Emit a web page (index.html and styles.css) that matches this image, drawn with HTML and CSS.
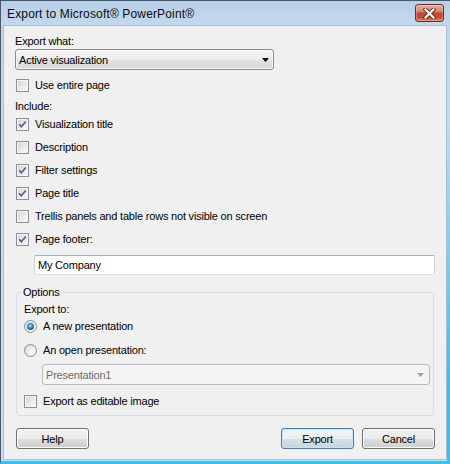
FILE: index.html
```html
<!DOCTYPE html>
<html>
<head>
<meta charset="utf-8">
<link rel="stylesheet" href="styles.css">
</head>
<body>
<div class="window">
  <div class="titlebar">
    <span class="title">Export to Microsoft® PowerPoint®</span>
    <span class="close">
      <svg width="13" height="11" viewBox="0 0 13 11">
        <path d="M2.5 1.5 L10.5 9.5 M10.5 1.5 L2.5 9.5" stroke="#5b2b25" stroke-width="4" stroke-linecap="square"/>
        <path d="M2.5 1.5 L10.5 9.5 M10.5 1.5 L2.5 9.5" stroke="#ffffff" stroke-width="2.2" stroke-linecap="square"/>
      </svg>
    </span>
  </div>
  <div class="client">
    <div class="label l-what">Export what:</div>
    <div class="combo">
      <span>Active visualization</span>
      <svg class="arrow" width="7" height="4" viewBox="0 0 7 4"><path d="M0 0 H7 L3.5 4 Z" fill="#000"/></svg>
    </div>
    <div class="row r-entire"><span class="cb"></span>Use entire page</div>
    <div class="label l-include">Include:</div>
    <div class="checks">
      <div class="row"><span class="cb"><svg width="11" height="11" viewBox="0 0 11 11"><path d="M2.2 5.3 L4.3 7.8 L8.8 2.6" fill="none" stroke="#4a5c94" stroke-width="1.6"/></svg></span>Visualization title</div>
      <div class="row"><span class="cb"></span>Description</div>
      <div class="row"><span class="cb"><svg width="11" height="11" viewBox="0 0 11 11"><path d="M2.2 5.3 L4.3 7.8 L8.8 2.6" fill="none" stroke="#4a5c94" stroke-width="1.6"/></svg></span>Filter settings</div>
      <div class="row"><span class="cb"><svg width="11" height="11" viewBox="0 0 11 11"><path d="M2.2 5.3 L4.3 7.8 L8.8 2.6" fill="none" stroke="#4a5c94" stroke-width="1.6"/></svg></span>Page title</div>
      <div class="row"><span class="cb"></span>Trellis panels and table rows not visible on screen</div>
      <div class="row"><span class="cb"><svg width="11" height="11" viewBox="0 0 11 11"><path d="M2.2 5.3 L4.3 7.8 L8.8 2.6" fill="none" stroke="#4a5c94" stroke-width="1.6"/></svg></span>Page footer:</div>
    </div>
    <div class="textbox">My Company</div>
    <fieldset class="group">
      <legend>Options</legend>
      <div class="label">Export to:</div>
      <div class="row r-radio1"><span class="radio on"><span class="dot"></span></span>A new presentation</div>
      <div class="row r-radio2"><span class="radio"></span>An open presentation:</div>
      <div class="combo disabled">
        <span>Presentation1</span>
        <svg class="arrow" width="7" height="4" viewBox="0 0 7 4"><path d="M0 0 H7 L3.5 4 Z" fill="#a3a3a3"/></svg>
      </div>
      <div class="row r-editable"><span class="cb"></span>Export as editable image</div>
    </fieldset>
    <div class="buttons">
      <span class="btn">Help</span>
      <span class="spacer"></span>
      <span class="btn default">Export</span>
      <span class="btn">Cancel</span>
    </div>
  </div>
</div>
</body>
</html>
```

FILE: styles.css
```css
html, body {
  margin: 0;
  padding: 0;
}
body {
  font-family: "Liberation Sans", Arial, sans-serif;
  font-size: 11px;
  letter-spacing: -0.2px;
  color: #000;
  background: #c6daef;
}
.window {
  width: 450px;
  height: 464px;
  box-sizing: border-box;
  display: flex;
  flex-direction: column;
  border-top: 1px solid #4a5866;
  border-left: 1px solid #4a5866;
  border-bottom: 3px solid #3cc0e8;
  background:
    linear-gradient(to bottom, rgba(60,192,232,0) 120px, #3cc0e8 380px) right top / 3px 100% no-repeat,
    linear-gradient(to bottom, #b7cfe9 0, #c3d8ee 24px, #cbdef1 100%);
}
.titlebar {
  height: 24px;
  display: flex;
  align-items: flex-start;
  padding-left: 6px;
}
.title {
  font-size: 12px;
  letter-spacing: 0.15px;
  line-height: 15px;
  margin-top: 6px;
  color: #0c0c0c;
}
.close {
  margin-left: auto;
  margin-right: 6px;
  margin-top: 3px;
  width: 29px;
  height: 18px;
  box-sizing: border-box;
  border: 1px solid #6a2e26;
  border-radius: 3px;
  display: flex;
  align-items: center;
  justify-content: center;
  background: linear-gradient(to bottom, #eab0a2 0%, #d98470 40%, #c2462e 50%, #c24a30 75%, #d8835f 100%);
  box-shadow: inset 0 0 0 1px rgba(255,255,255,0.25);
}
.client {
  flex: 1;
  margin: 0 3px 1px 2px;
  background: #f0f0f0;
  border: 1px solid #aabdd2;
  padding: 8px 11px 0 11px;
  display: flex;
  flex-direction: column;
}
.label {
  line-height: 14px;
  height: 14px;
}
.combo {
  margin-top: 1px;
  width: 259px;
  height: 21px;
  box-sizing: border-box;
  border: 1px solid #8a8a8a;
  border-radius: 3px;
  background: linear-gradient(to bottom, #f4f4f4 0%, #ececec 50%, #e1e1e1 51%, #d9d9d9 100%);
  box-shadow: inset 0 0 0 1px #fbfbfb;
  display: flex;
  align-items: center;
  padding-left: 3px;
  padding-right: 4px;
}
.combo .arrow {
  margin-left: auto;
}
.combo.disabled {
  width: auto;
  margin: 5px 0 0 18px;
  border-color: #b6babd;
  background: #f4f4f4;
  box-shadow: none;
  color: #6d6d6d;
  padding-right: 5px;
}
.row {
  height: 18px;
  display: flex;
  align-items: center;
}
.r-entire { margin-top: 6px; }
.l-include { margin-top: 5px; }
.checks {
  margin-top: 2px;
  display: flex;
  flex-direction: column;
  gap: 5px;
}
.cb {
  width: 13px;
  height: 13px;
  box-sizing: border-box;
  border: 1px solid #8e8f8f;
  background: linear-gradient(135deg, #cdd0d5 0%, #e6e8eb 50%, #fafafa 100%);
  box-shadow: inset 0 0 0 1px #f6f6f6;
  margin-left: 1px;
  margin-right: 6px;
  flex: none;
  display: flex;
  align-items: center;
  justify-content: center;
}
.cb svg { display: block; }
.textbox {
  margin: 7px 0 0 19px;
  height: 20px;
  box-sizing: border-box;
  background: #fff;
  border: 1px solid;
  border-color: #a6b0c0 #c8d3e2 #d6dee9 #c8d3e2;
  border-radius: 2px;
  padding-left: 3px;
  line-height: 18px;
}
.group {
  margin: 10px 1px 0 1px;
  padding: 3px 3px 5px 7px;
  border: 1px solid #d5dfe5;
  border-radius: 3px;
  min-width: 0;
  display: flex;
  flex-direction: column;
}
.group legend {
  padding: 0 1px;
  margin-left: -2px;
  line-height: 14px;
}
.group .row .cb { margin-left: 0; }
.r-radio1 { margin-top: 1px; }
.r-radio2 { margin-top: 6px; }
.r-editable { margin-top: 7px; }
.radio {
  width: 13px;
  height: 13px;
  box-sizing: border-box;
  border: 1px solid #8e8f8f;
  border-radius: 50%;
  background: radial-gradient(circle at 65% 65%, #fbfbfb 0%, #e6e8eb 55%, #cdd0d5 100%);
  margin-right: 6px;
  flex: none;
  display: flex;
  align-items: center;
  justify-content: center;
}
.radio .dot {
  width: 7px;
  height: 7px;
  border-radius: 50%;
  background: radial-gradient(circle at 45% 40%, #b8ecff 0%, #3f93c8 35%, #1a4f80 75%, #133a63 100%);
}
.buttons {
  margin-top: 12px;
  display: flex;
  align-items: center;
}
.spacer { flex: 1; }
.btn {
  width: 73px;
  height: 21px;
  box-sizing: border-box;
  border: 1px solid #707070;
  border-radius: 3px;
  background: linear-gradient(to bottom, #f2f2f2 0%, #ebebeb 50%, #dddddd 51%, #cfcfcf 100%);
  box-shadow: inset 0 0 0 1px #fcfcfc;
  display: flex;
  align-items: center;
  justify-content: center;
}
.buttons .btn:first-child { margin-left: 1px; }
.btn.default {
  border-color: #3c7fb1;
  box-shadow: inset 0 0 0 1px #c4e5f6;
  background: linear-gradient(to bottom, #f1f5f8 0%, #e8eef2 50%, #d8e0e6 51%, #cdd5db 100%);
  margin-right: 8px;
}
```
